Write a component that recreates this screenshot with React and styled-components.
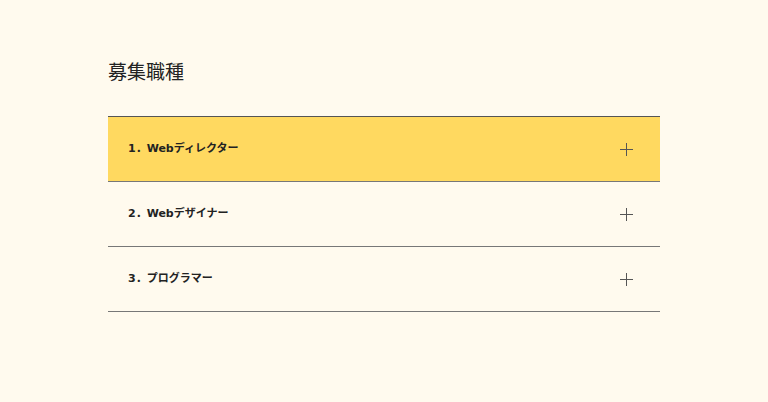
import React from "react";
import styled, { createGlobalStyle } from "styled-components";

const GlobalStyle = createGlobalStyle`
  html, body {
    margin: 0;
    padding: 0;
    background: #fffaee;
    font-family: "Noto Sans CJK JP", "Noto Sans", sans-serif;
    color: #222;
  }
`;

const jobs = ["Webディレクター", "Webデザイナー", "プログラマー"];

const Page = styled.div`
  width: 552px;
  margin: 0 auto;
  padding-top: 56px;
  height: 346px;
`;

const Title = styled.h2`
  margin: 0 0 30px 0;
  font-size: 19px;
  font-weight: 400;
  line-height: 30px;
  color: #222;
`;

const List = styled.div`
  border-top: 1px solid #555;
`;

const Row = styled.div`
  display: flex;
  align-items: center;
  justify-content: space-between;
  height: 64px;
  padding: 0 27px 0 20px;
  border-bottom: 1px solid #777;
  background: ${(p) => (p.$active ? "#ffd960" : "transparent")};
`;

const Label = styled.span`
  font-family: "DejaVu Sans", "Noto Sans CJK JP", sans-serif;
  font-size: 11px;
  line-height: 14px;
  padding-bottom: 1px;
  font-weight: 700;
  color: #222;
`;

const Plus = () => (
  <svg width="13" height="13" viewBox="0 0 13 13">
    <path d="M6.5 0 V13 M0 6.5 H13" stroke="#555" strokeWidth="1" fill="none" />
  </svg>
);

const App = () => {
  return (
    <>
      <GlobalStyle />
      <Page>
        <Title>募集職種</Title>
        <List>
          {jobs.map((job, i) => (
            <Row key={job} $active={i === 0}>
              <Label>
                {i + 1}．{job}
              </Label>
              <Plus />
            </Row>
          ))}
        </List>
      </Page>
    </>
  );
};

export default App;
